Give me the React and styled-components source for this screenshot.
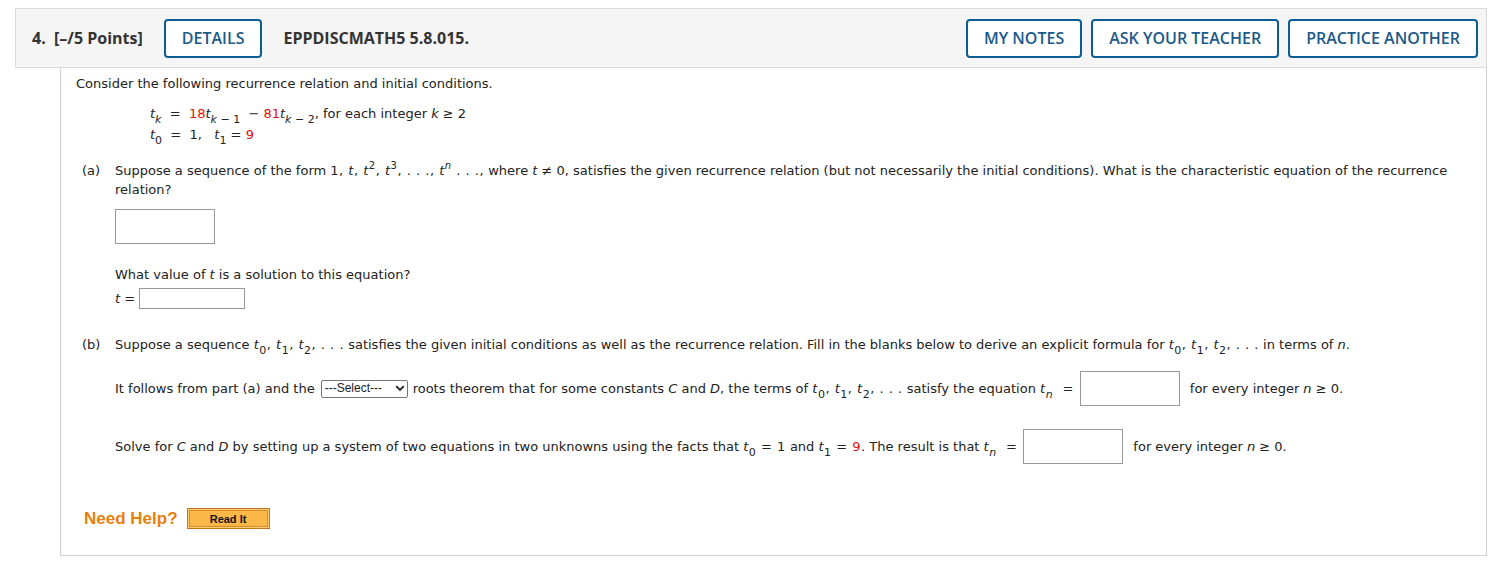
import React from "react";
import styled, { createGlobalStyle } from "styled-components";

const Global = createGlobalStyle`
  html, body { margin: 0; padding: 0; background: #fff; }
  body { font-family: "DejaVu Sans", sans-serif; color: #222; }
`;

const Page = styled.div`
  padding: 8px 10px 0 15px;
`;

const Header = styled.div`
  height: 58px;
  display: flex;
  align-items: center;
  background: #f5f5f5;
  border: 1px solid #dcdcdc;
  padding: 0 8px 0 16px;
  font-family: "Open Sans", sans-serif;
  font-size: 16px;
  color: #333;
`;

const HeadText = styled.span`
  font-weight: 700;
  margin-right: ${(p) => p.$mr || 0}px;
  white-space: nowrap;
`;

const Spacer = styled.div`
  flex: 1;
`;

const HeadButton = styled.button`
  height: 39px;
  padding: 0 16px;
  border: 2px solid #0b5d93;
  border-radius: 4px;
  background: #fff;
  color: #1c5a88;
  font-family: "Open Sans", sans-serif;
  font-weight: 600;
  font-size: 16px;
  margin-left: ${(p) => p.$ml || 0}px;
  margin-right: ${(p) => p.$mr || 0}px;
  white-space: nowrap;
  cursor: pointer;
`;

const Body = styled.div`
  margin-left: 45px;
  border: 1px solid #cfcfcf;
  border-top: none;
  padding: 6px 15px 26px 15px;
  font-size: 13px;
  line-height: 19px;
`;

const Para = styled.div`
  margin-top: ${(p) => p.$mt || 0}px;
`;

const MathBlock = styled.div`
  margin: 10px 0 0 74px;
  line-height: 21px;
`;

const MathLine = styled.div`
  white-space: nowrap;
`;

const V = styled.i`
  font-style: italic;
`;

const Sub = styled.sub`
  font-size: 11px;
  vertical-align: -5px;
  line-height: 0;
  font-style: ${(p) => (p.$it ? "italic" : "normal")};
`;

const Sup = styled.sup`
  font-size: 10px;
  vertical-align: 6px;
  line-height: 0;
`;

const Red = styled.span`
  color: #e0100a;
`;

const MathSpan = styled.span`
  font-family: "DejaVu Sans", sans-serif;
  letter-spacing: 0.5px;
`;

const Part = styled.div`
  display: flex;
  margin-left: 6px;
  margin-top: ${(p) => p.$mt || 0}px;
`;

const PartLabel = styled.div`
  width: 33px;
  flex: none;
`;

const PartBody = styled.div`
  flex: 1;
`;

const BigInput = styled.div`
  width: 98px;
  height: 33px;
  border: 1px solid #999;
  margin-top: ${(p) => p.$mt || 0}px;
  display: inline-block;
  vertical-align: middle;
  margin-left: ${(p) => p.$ml || 0}px;
  margin-right: ${(p) => p.$mr || 0}px;
`;

const SmallInput = styled.div`
  width: 104px;
  height: 19px;
  border: 1px solid #999;
  display: inline-block;
  vertical-align: middle;
  margin-left: 4px;
`;

const Row = styled.div`
  display: flex;
  align-items: center;
  white-space: nowrap;
  margin-top: ${(p) => p.$mt || 0}px;
`;

const Select = styled.div`
  display: inline-flex;
  align-items: center;
  justify-content: space-between;
  width: 80px;
  height: 16px;
  padding: 0 2px 0 3px;
  border: 1px solid #767676;
  border-radius: 2px;
  font-family: "Liberation Sans", Arial, sans-serif;
  font-size: 12px;
  color: #222;
  margin: 0 5px 0 6px;
  background: #fff;
`;

const Help = styled.div`
  display: flex;
  align-items: center;
  margin: 44px 0 0 8px;
`;

const HelpText = styled.span`
  font-family: "Liberation Sans", Arial, sans-serif;
  font-weight: 700;
  font-size: 17px;
  color: #e8800c;
  margin-right: 9px;
`;

const ReadIt = styled.button`
  width: 83px;
  height: 21px;
  border: 1px solid #c5741a;
  background: #fbb748;
  box-shadow: inset 0 0 0 1px #ffcd73, inset 0 0 0 2px #d88b2d;
  font-family: "Liberation Sans", Arial, sans-serif;
  font-weight: 700;
  font-size: 11px;
  color: #111;
  padding: 0;
  cursor: pointer;
`;

const Chevron = () => (
  <svg width="10" height="7" viewBox="0 0 10 7">
    <path d="M1.2 1.2 L5 5 L8.8 1.2" fill="none" stroke="#222" strokeWidth="1.8" />
  </svg>
);

const T = ({ s, it }) => (
  <>
    <V>t</V>
    <Sub $it={it}>{s}</Sub>
  </>
);

const Seq = () => (
  <MathSpan>
    <T s="0" />, <T s="1" />, <T s="2" />, . . .
  </MathSpan>
);

export default function App() {
  return (
    <Page>
      <Global />
      <Header>
        <HeadText $mr={21}>4.&nbsp; [–/5 Points]</HeadText>
        <HeadButton $mr={21}>DETAILS</HeadButton>
        <HeadText>EPPDISCMATH5 5.8.015.</HeadText>
        <Spacer />
        <HeadButton>MY NOTES</HeadButton>
        <HeadButton $ml={9}>ASK YOUR TEACHER</HeadButton>
        <HeadButton $ml={9}>PRACTICE ANOTHER</HeadButton>
      </Header>
      <Body>
        <Para>Consider the following recurrence relation and initial conditions.</Para>
        <MathBlock>
          <MathLine>
            <T s="k" it /> &nbsp;=&nbsp; <Red>18</Red><V>t</V>
            <Sub><V>k</V> − 1</Sub>&nbsp; − <Red>81</Red><V>t</V>
            <Sub><V>k</V> − 2</Sub>, for each integer <V>k</V> ≥ 2
          </MathLine>
          <MathLine>
            <T s="0" /> &nbsp;=&nbsp; 1, &nbsp;&nbsp;<T s="1" /> = <Red>9</Red>
          </MathLine>
        </MathBlock>
        <Part $mt={16}>
          <PartLabel>(a)</PartLabel>
          <PartBody>
            <div>
              Suppose a sequence of the form{" "}
              <MathSpan>
                1, <V>t</V>, <V>t</V><Sup>2</Sup>, <V>t</V><Sup>3</Sup>, . . ., <V>t</V><Sup><V>n</V></Sup> . . .,
              </MathSpan>{" "}
              where <V>t</V> ≠ 0, satisfies the given recurrence relation (but not necessarily the initial conditions). What is the characteristic equation of the recurrence relation?
            </div>
            <BigInput $mt={10} />
            <Para $mt={21}>
              What value of <V>t</V> is a solution to this equation?
            </Para>
            <Row $mt={4}>
              <V>t</V>&nbsp;= <SmallInput />
            </Row>
          </PartBody>
        </Part>
        <Part $mt={26}>
          <PartLabel>(b)</PartLabel>
          <PartBody>
            <Row>
              Suppose a sequence&nbsp;<Seq />&nbsp;satisfies the given initial conditions as well as the recurrence relation. Fill in the blanks below to derive an explicit formula for&nbsp;<Seq />&nbsp;in terms of&nbsp;<V>n</V>.
            </Row>
            <Row $mt={17}>
              It follows from part (a) and the
              <Select>
                <span>---Select---</span>
                <Chevron />
              </Select>
              roots theorem that for some constants&nbsp;<V>C</V>&nbsp;and&nbsp;<V>D</V>, the terms of&nbsp;<Seq />&nbsp;satisfy the equation&nbsp;
              <MathSpan><T s="n" it /> &nbsp;=</MathSpan>
              <BigInput $ml={6} $mr={10} />
              for every integer&nbsp;<V>n</V>&nbsp;≥ 0.
            </Row>
            <Row $mt={23}>
              Solve for&nbsp;<V>C</V>&nbsp;and&nbsp;<V>D</V>&nbsp;by setting up a system of two equations in two unknowns using the facts that&nbsp;
              <MathSpan><T s="0" /> = 1</MathSpan>&nbsp;and&nbsp;<MathSpan><T s="1" /> = <Red>9</Red></MathSpan>. The result is that&nbsp;
              <MathSpan><T s="n" it /> &nbsp;=</MathSpan>
              <BigInput $ml={6} $mr={10} />
              for every integer&nbsp;<V>n</V>&nbsp;≥ 0.
            </Row>
          </PartBody>
        </Part>
        <Help>
          <HelpText>Need Help?</HelpText>
          <ReadIt>Read It</ReadIt>
        </Help>
      </Body>
    </Page>
  );
}
